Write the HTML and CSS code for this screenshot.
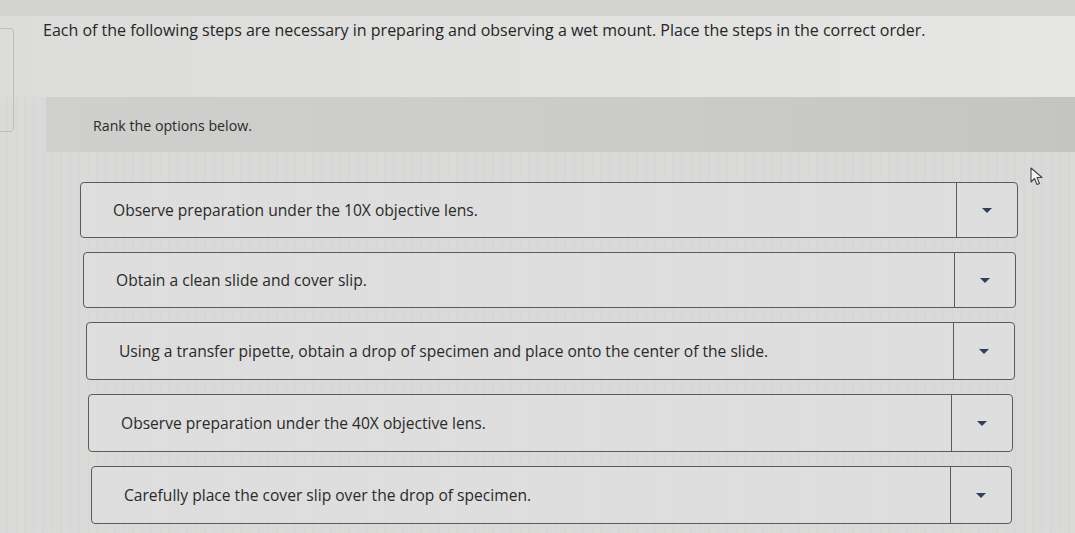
FILE: index.html
```html
<!DOCTYPE html>
<html>
<head>
<meta charset="utf-8">
<link rel="stylesheet" href="styles.css">
</head>
<body>
<div class="page">
  <div class="topstrip"></div>
  <div class="header">
    <div class="edge"></div>
    <p class="question">Each of the following steps are necessary in preparing and observing a wet mount. Place the steps in the correct order.</p>
  </div>
  <div class="rankbar"><span>Rank the options below.</span></div>
  <div class="list">
    <div class="row r1"><div class="label">Observe preparation under the 10X objective lens.</div><div class="drop"><span class="tri"></span></div></div>
    <div class="row r2"><div class="label">Obtain a clean slide and cover slip.</div><div class="drop"><span class="tri"></span></div></div>
    <div class="row r3"><div class="label">Using a transfer pipette, obtain a drop of specimen and place onto the center of the slide.</div><div class="drop"><span class="tri"></span></div></div>
    <div class="row r4"><div class="label">Observe preparation under the 40X objective lens.</div><div class="drop"><span class="tri"></span></div></div>
    <div class="row r5"><div class="label">Carefully place the cover slip over the drop of specimen.</div><div class="drop"><span class="tri"></span></div></div>
  </div>
  <svg class="cursor" width="14" height="20" viewBox="0 0 14 20"><path d="M1 1 L1 15 L4.5 11.5 L7 17.5 L9.5 16.5 L7 10.5 L12 10.5 Z" fill="#f4f4f4" stroke="#444" stroke-width="1.1" stroke-linejoin="round"/></svg>
</div>
</body>
</html>
```
FILE: styles.css
```css
html, body {
  margin: 0;
  padding: 0;
}
body {
  width: 1075px;
  height: 533px;
  overflow: hidden;
  background: #d9d9d8;
  font-family: "Open Sans", "Lato", sans-serif;
  color: #2b2b2b;
}
.page {
  position: relative;
  width: 1075px;
  height: 533px;
  background: repeating-linear-gradient(90deg, #dadad9 0px, #dadad9 6px, #d4d5d4 7px, #dcdcdb 9px);
}
.topstrip {
  height: 16px;
  background: #d3d3d2;
}
.header {
  position: relative;
  height: 81px;
  background: linear-gradient(90deg, #dcdcdb 0%, #e2e2e1 60%, #e6e6e5 100%);
}
.edge {
  position: absolute;
  left: -6px;
  top: 12px;
  width: 18px;
  height: 102px;
  border: 1px solid #bdbdbc;
  border-radius: 4px;
  z-index: 1;
}
.question {
  margin: 0;
  padding: 3px 0 0 43px;
  font-size: 16px;
  color: #262626;
}
.rankbar {
  margin-left: 46px;
  height: 55px;
  background: linear-gradient(90deg, #cfcfce 0%, #cbcbca 60%, #c4c4c3 100%);
  display: flex;
  align-items: center;
  padding-left: 47px;
  padding-top: 2px;
  box-sizing: border-box;
  font-size: 14.2px;
  color: #2a2a2a;
}
.list {
  display: flex;
  flex-direction: column;
  gap: 14px;
  padding-top: 30px;
}
.row {
  display: flex;
  height: 56px;
  box-sizing: border-box;
  border: 1.5px solid #5a5b5d;
  border-radius: 4px;
  background: rgba(226,226,225,0.55);
}
.r1 { margin-left: 80px; width: 938px; }
.r2 { margin-left: 83px; width: 933px; }
.r3 { margin-left: 86px; width: 929px; height: 58px; }
.r4 { margin-left: 88px; width: 925px; height: 58px; }
.r5 { margin-left: 91px; width: 921px; height: 58px; }
.label {
  flex: 1;
  display: flex;
  align-items: center;
  padding-left: 32px;
  font-size: 15.6px;
  color: #2a2a2a;
  border-right: 1.5px solid #5a5b5d;
}
.drop {
  width: 60px;
  display: flex;
  align-items: center;
  justify-content: center;
}
.tri {
  width: 0;
  height: 0;
  border-left: 5px solid transparent;
  border-right: 5px solid transparent;
  border-top: 5px solid #2f3f5c;
}
.cursor {
  position: absolute;
  left: 1030px;
  top: 167px;
}
```
